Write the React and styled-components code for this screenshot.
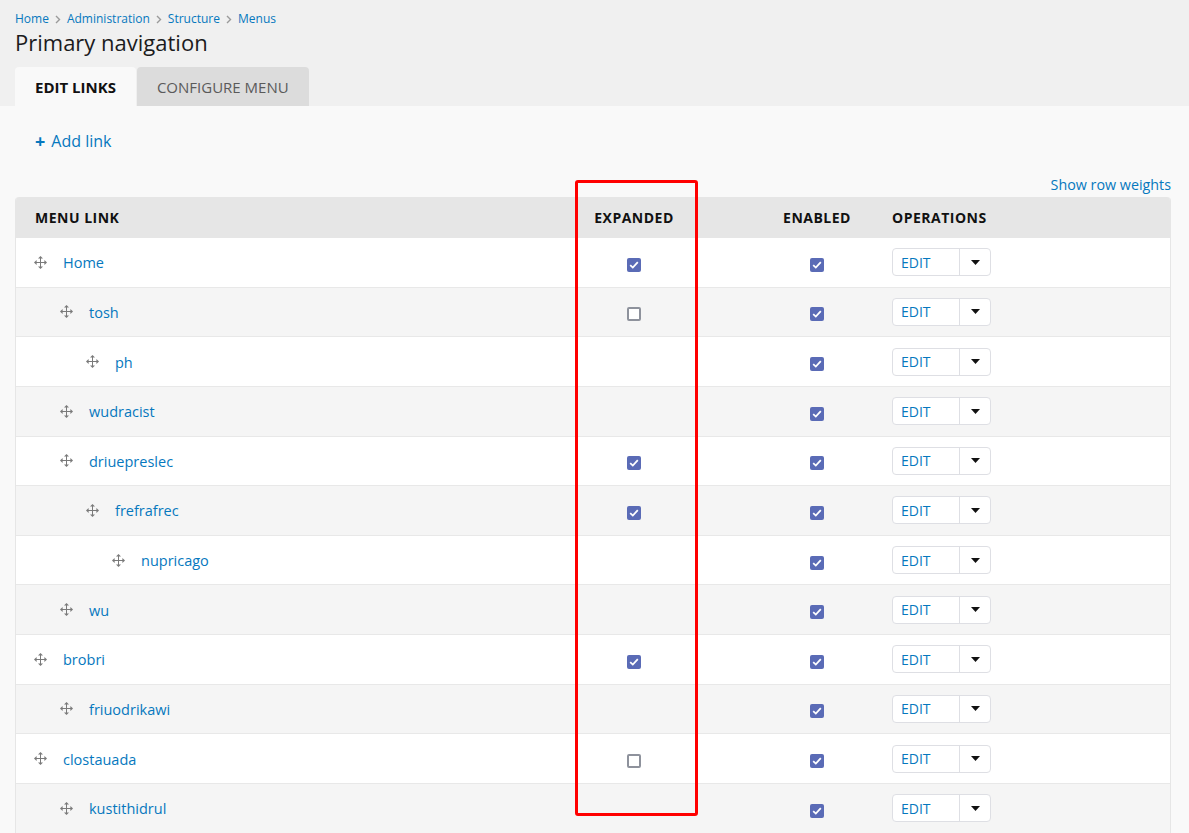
import React from 'react'
import styled, { createGlobalStyle } from 'styled-components'

const GlobalStyle = createGlobalStyle`
  html, body {
    margin: 0;
    padding: 0;
    background: #f9f9f9;
    font-family: "Open Sans", "Noto Sans", sans-serif;
    color: #232429;
  }
  * { box-sizing: border-box; }
`

const Header = styled.header`
  background: #f0f0f0;
  padding: 10px 18px 0 15px;
`

const Crumbs = styled.nav`
  display: flex;
  align-items: center;
  gap: 6px;
  font-size: 12px;
  line-height: 18px;
`

const CrumbLink = styled.a`
  color: #0678be;
  text-decoration: none;
`

const Title = styled.h1`
  margin: 0;
  font-size: 22px;
  font-weight: 400;
  line-height: 28px;
  color: #1b1b1d;
`

const Tabs = styled.div`
  display: flex;
  margin-top: 11px;
  gap: 1px;
`

const Tab = styled.a`
  display: flex;
  align-items: center;
  height: 39px;
  padding: 0 20px;
  font-size: 15px;
  text-transform: uppercase;
  text-decoration: none;
  border-radius: 4px 4px 0 0;
  font-weight: ${p => (p.active ? 700 : 400)};
  color: ${p => (p.active ? '#111' : '#5a5a5a')};
  background: ${p => (p.active ? '#f9f9f9' : '#dcdcdc')};
`

const Content = styled.main`
  position: relative;
  padding: 24px 18px 0 15px;
`

const AddLink = styled.a`
  display: inline-flex;
  align-items: center;
  gap: 6px;
  margin-left: 20px;
  font-size: 16px;
  line-height: 22px;
  color: #0678be;
  text-decoration: none;
  b { font-size: 18px; }
`

const WeightsRow = styled.div`
  display: flex;
  justify-content: flex-end;
  margin-top: 22px;
  font-size: 14.3px;
  line-height: 20px;
  a { color: #0678be; text-decoration: none; }
`

const Table = styled.div`
  margin-top: 2px;
  border-left: 1px solid #e6e6e6;
  border-right: 1px solid #e6e6e6;
  border-radius: 4px 4px 0 0;
  overflow: hidden;
`

const Grid = styled.div`
  display: grid;
  grid-template-columns: 560px 119px 197px 1fr;
  align-items: center;
`

const HeadRow = styled(Grid)`
  height: 41px;
  background: #e6e6e6;
  font-size: 14px;
  font-weight: 700;
  letter-spacing: 0.5px;
  text-transform: uppercase;
  color: #111;
`

const Row = styled(Grid)`
  height: 49.64px;
  background: ${p => (p.odd ? '#f5f5f5' : '#fff')};
  border-bottom: 1px solid #e8e8e8;
`

const LinkCell = styled.div`
  display: flex;
  align-items: center;
  gap: 16px;
  padding-left: ${p => 18 + p.level * 26}px;
  font-size: 14.5px;
  a { color: #0678be; text-decoration: none; margin-top: 1px; }
`

const HeadCell = styled.div`
  padding-left: 19px;
`

const CenterCell = styled.div`
  display: flex;
  justify-content: center;
  padding-left: ${p => p.offset || 0}px;
  padding-right: ${p => p.trim || 0}px;
`

const OpsCell = styled.div`
  padding-left: 0;
`

const Box = styled.span`
  display: inline-flex;
  align-items: center;
  justify-content: center;
  width: 14px;
  height: 14px;
  border-radius: 2px;
  margin-top: 5px;
  background: ${p => (p.checked ? '#5a6bb6' : '#fff')};
  border: ${p => (p.checked ? 'none' : '2px solid #8e929c')};
`

const DropButton = styled.div`
  display: inline-flex;
  height: 28px;
  border: 1px solid #dedfe4;
  border-radius: 4px;
  background: #fff;
`

const DropMain = styled.a`
  display: flex;
  align-items: center;
  width: 67px;
  padding-left: 8px;
  font-size: 14px;
  color: #0678be;
  text-decoration: none;
  border-right: 1px solid #dedfe4;
`

const DropToggle = styled.span`
  display: flex;
  align-items: center;
  justify-content: center;
  width: 30px;
`

const Highlight = styled.div`
  position: absolute;
  left: 575px;
  top: 74px;
  width: 123px;
  height: 636px;
  border: 3px solid #ff0000;
  border-radius: 3px;
  pointer-events: none;
`

const Chevron = () => (
  <svg width="6" height="9" viewBox="0 0 6 9">
    <path d="M1 1l3.5 3.5L1 8" fill="none" stroke="#9a9a9a" strokeWidth="1.4" />
  </svg>
)

const DragIcon = () => (
  <svg width="13" height="13" viewBox="0 0 13 13" fill="#7a7a7a">
    <rect x="6" y="2" width="1" height="9" />
    <rect x="2" y="6" width="9" height="1" />
    <path d="M6.5 0L9 2.6H4z" />
    <path d="M6.5 13L9 10.4H4z" />
    <path d="M0 6.5L2.6 4v5z" />
    <path d="M13 6.5L10.4 4v5z" />
  </svg>
)

const Check = () => (
  <svg width="10" height="8" viewBox="0 0 10 8">
    <path d="M1.2 4.2l2.6 2.4L8.8 1.2" fill="none" stroke="#fff" strokeWidth="1.8" />
  </svg>
)

const Caret = () => (
  <svg width="9" height="5" viewBox="0 0 9 5">
    <path d="M0 0h9L4.5 5z" fill="#111" />
  </svg>
)

const links = [
  { title: 'Home', level: 0, expanded: true },
  { title: 'tosh', level: 1, expanded: false },
  { title: 'ph', level: 2 },
  { title: 'wudracist', level: 1 },
  { title: 'driuepreslec', level: 1, expanded: true },
  { title: 'frefrafrec', level: 2, expanded: true },
  { title: 'nupricago', level: 3 },
  { title: 'wu', level: 1 },
  { title: 'brobri', level: 0, expanded: true },
  { title: 'friuodrikawi', level: 1 },
  { title: 'clostauada', level: 0, expanded: false },
  { title: 'kustithidrul', level: 1 },
]

export default function App() {
  return (
    <>
      <GlobalStyle />
      <Header>
        <Crumbs>
          <CrumbLink href="#">Home</CrumbLink>
          <Chevron />
          <CrumbLink href="#">Administration</CrumbLink>
          <Chevron />
          <CrumbLink href="#">Structure</CrumbLink>
          <Chevron />
          <CrumbLink href="#">Menus</CrumbLink>
        </Crumbs>
        <Title>Primary navigation</Title>
        <Tabs>
          <Tab active href="#">Edit links</Tab>
          <Tab href="#">Configure menu</Tab>
        </Tabs>
      </Header>
      <Content>
        <AddLink href="#"><b>+</b>Add link</AddLink>
        <WeightsRow><a href="#">Show row weights</a></WeightsRow>
        <Table>
          <HeadRow>
            <HeadCell>Menu link</HeadCell>
            <CenterCell trim={3}>Expanded</CenterCell>
            <CenterCell offset={49} trim={2}>Enabled</CenterCell>
            <OpsCell>Operations</OpsCell>
          </HeadRow>
          {links.map((l, i) => (
            <Row key={l.title} odd={i % 2 === 1}>
              <LinkCell level={l.level}>
                <DragIcon />
                <a href="#">{l.title}</a>
              </LinkCell>
              <CenterCell trim={3}>
                {l.expanded !== undefined && (
                  <Box checked={l.expanded}>{l.expanded && <Check />}</Box>
                )}
              </CenterCell>
              <CenterCell offset={49} trim={2}>
                <Box checked><Check /></Box>
              </CenterCell>
              <OpsCell>
                <DropButton>
                  <DropMain href="#">EDIT</DropMain>
                  <DropToggle><Caret /></DropToggle>
                </DropButton>
              </OpsCell>
            </Row>
          ))}
        </Table>
        <Highlight />
      </Content>
    </>
  )
}
